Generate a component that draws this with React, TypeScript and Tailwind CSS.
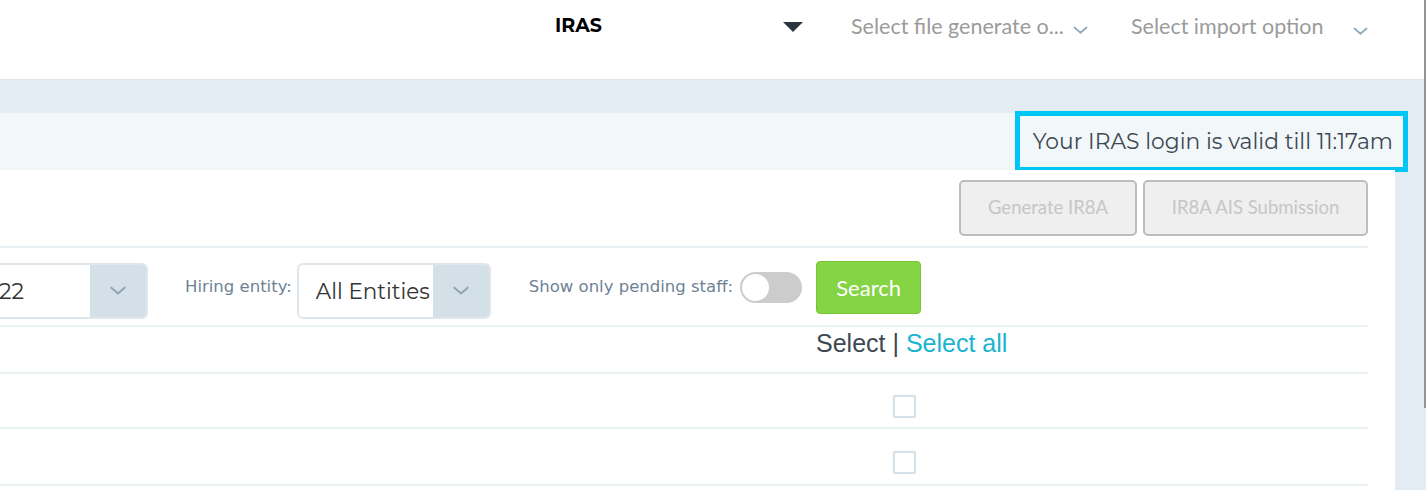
import React from 'react';

const Chevron: React.FC<{ className?: string }> = ({ className }) => (
    <svg viewBox="0 0 20 12" className={className} fill="none" stroke="currentColor" strokeWidth={2.4} strokeLinecap="round" strokeLinejoin="round">
        <path d="M2 2l8 7 8-7" />
    </svg>
);

const Checkbox: React.FC = () => (
    <div className="h-[23px] w-[23px] rounded-[3px] border-2 border-[#d5e1e8] bg-white shadow-[0_0_1px_#c9d6de]" />
);

const App: React.FC = () => {
    return (
        <div className="flex h-[490px] w-[1426px] overflow-hidden bg-[#e4ecf3]">
            <div className="flex w-[1424px] flex-col">
                {/* top bar */}
                <div className="flex h-[80px] shrink-0 items-start border-b border-[#dfe6ec] bg-white pl-[555px] pt-[12px]">
                    <div className="flex w-[248px] items-center justify-between">
                        <span className="font-['Montserrat','Inter',sans-serif] text-[19px] font-bold leading-[28px] text-black">IRAS</span>
                        <svg viewBox="0 0 20 10" className="mt-[1px] h-[10px] w-[20px] text-[#2b3440]" fill="currentColor">
                            <path d="M0 0h20L10 10z" />
                        </svg>
                    </div>
                    <div className="ml-[48px] flex w-[239px] items-center justify-between">
                        <span className="font-['Lato',sans-serif] text-[21.5px] leading-[28px] text-[#9b9b9b]">Select file generate o...</span>
                        <Chevron className="mt-[8px] h-[9px] w-[19px] text-[#93abbb]" />
                    </div>
                    <div className="ml-[41px] flex w-[239px] items-center justify-between">
                        <span className="font-['Lato',sans-serif] text-[21.5px] leading-[28px] text-[#9b9b9b]">Select import option</span>
                        <Chevron className="mt-[10px] h-[9px] w-[19px] text-[#93abbb]" />
                    </div>
                </div>

                {/* main area */}
                <div className="flex flex-1 flex-col pr-[29px] pt-[33px]">
                    <div className="flex flex-1 flex-col">
                        {/* card header */}
                        <div className="flex h-[57px] shrink-0 items-center justify-end bg-[#f2f7fa]">
                            <div className="-mr-[13px] flex h-[61px] items-center border-[5px] border-[#00c6f6] bg-[#f2f7fa] pl-[13px] pr-[10px]">
                                <span className="whitespace-nowrap font-['Montserrat','Inter',sans-serif] text-[21.8px] text-[#3d4853]">
                                    Your IRAS login is valid till 11:17am
                                </span>
                            </div>
                        </div>

                        {/* card body */}
                        <div className="flex flex-1 flex-col bg-white pr-[27px]">
                            <div className="flex justify-end gap-[6px] border-b-2 border-[#eaf1f5] pb-[10px] pt-[10px]">
                                <button className="h-[56px] w-[178px] rounded-[5px] border-2 border-[#bdbdbd] bg-[#efefef] font-['Lato',sans-serif] text-[18.5px] text-[#c6c6c6]">
                                    Generate IR8A
                                </button>
                                <button className="h-[56px] w-[225px] rounded-[5px] border-2 border-[#bdbdbd] bg-[#efefef] font-['Lato',sans-serif] text-[18.5px] text-[#c6c6c6]">
                                    IR8A AIS Submission
                                </button>
                            </div>

                            {/* filters */}
                            <div className="flex h-[79px] items-start border-b-2 border-[#eaf1f5]">
                                <div className="-ml-[40px] mt-[15px] flex h-[56px] w-[188px] shrink-0 overflow-hidden rounded-[6px] border-2 border-[#e0e7ec] bg-white">
                                    <div className="flex min-w-0 flex-1 items-center whitespace-nowrap pl-[10px] font-['Montserrat','Inter',sans-serif] text-[22px] text-[#333]">2022</div>
                                    <div className="flex w-[56px] shrink-0 items-center justify-center bg-[#d3e0e8]">
                                        <Chevron className="h-[10px] w-[20px] text-[#8fa5b5]" />
                                    </div>
                                </div>
                                <span className="ml-[37px] mt-[28px] whitespace-nowrap font-['DejaVu_Sans',sans-serif] text-[16.5px] leading-[22px] text-[#6e8296]">Hiring entity:</span>
                                <div className="ml-[5px] mt-[15px] flex h-[56px] w-[194px] shrink-0 overflow-hidden rounded-[6px] border-2 border-[#e0e7ec] bg-white">
                                    <div className="flex min-w-0 flex-1 items-center overflow-hidden whitespace-nowrap pl-[17px] font-['Montserrat','Inter',sans-serif] text-[21.5px] text-[#333]">All Entities</div>
                                    <div className="flex w-[56px] shrink-0 items-center justify-center bg-[#d3e0e8]">
                                        <Chevron className="h-[10px] w-[20px] text-[#8fa5b5]" />
                                    </div>
                                </div>
                                <span className="ml-[38px] mt-[28px] whitespace-nowrap font-['DejaVu_Sans',sans-serif] text-[16.5px] leading-[22px] text-[#6e8296]">Show only pending staff:</span>
                                <div className="ml-[7px] mt-[24px] flex h-[31px] w-[62px] shrink-0 items-center rounded-full bg-[#cccccc] pl-[2px]">
                                    <div className="h-[27px] w-[27px] rounded-full bg-white" />
                                </div>
                                <button className="ml-[14px] mt-[13px] h-[53px] w-[105px] shrink-0 rounded-[4px] border border-[#76c535] bg-[#84d444] font-['Lato',sans-serif] text-[22px] text-white">
                                    Search
                                </button>
                            </div>

                            {/* select header */}
                            <div className="flex h-[47px] border-b-2 border-[#eaf1f5] pl-[816px] pt-[1px]">
                                <span className="whitespace-nowrap font-['Liberation_Sans',sans-serif] text-[25px] leading-[30px] text-[#3d4853]">
                                    Select | <span className="text-[#19b4d1]">Select all</span>
                                </span>
                            </div>

                            {/* rows */}
                            <div className="flex h-[55px] items-start border-b-2 border-[#eaf1f5] pl-[893px] pt-[21px]">
                                <Checkbox />
                            </div>
                            <div className="flex h-[57px] items-start border-b-2 border-[#eaf1f5] pl-[893px] pt-[22px]">
                                <Checkbox />
                            </div>
                            <div className="flex-1" />
                        </div>
                    </div>
                </div>
            </div>

            {/* scrollbar strip */}
            <div className="flex w-[2px] flex-col">
                <div className="h-[408px] bg-[#8f9498]" />
                <div className="flex-1 bg-[#e4ecf3]" />
            </div>
        </div>
    );
};

export default App;
